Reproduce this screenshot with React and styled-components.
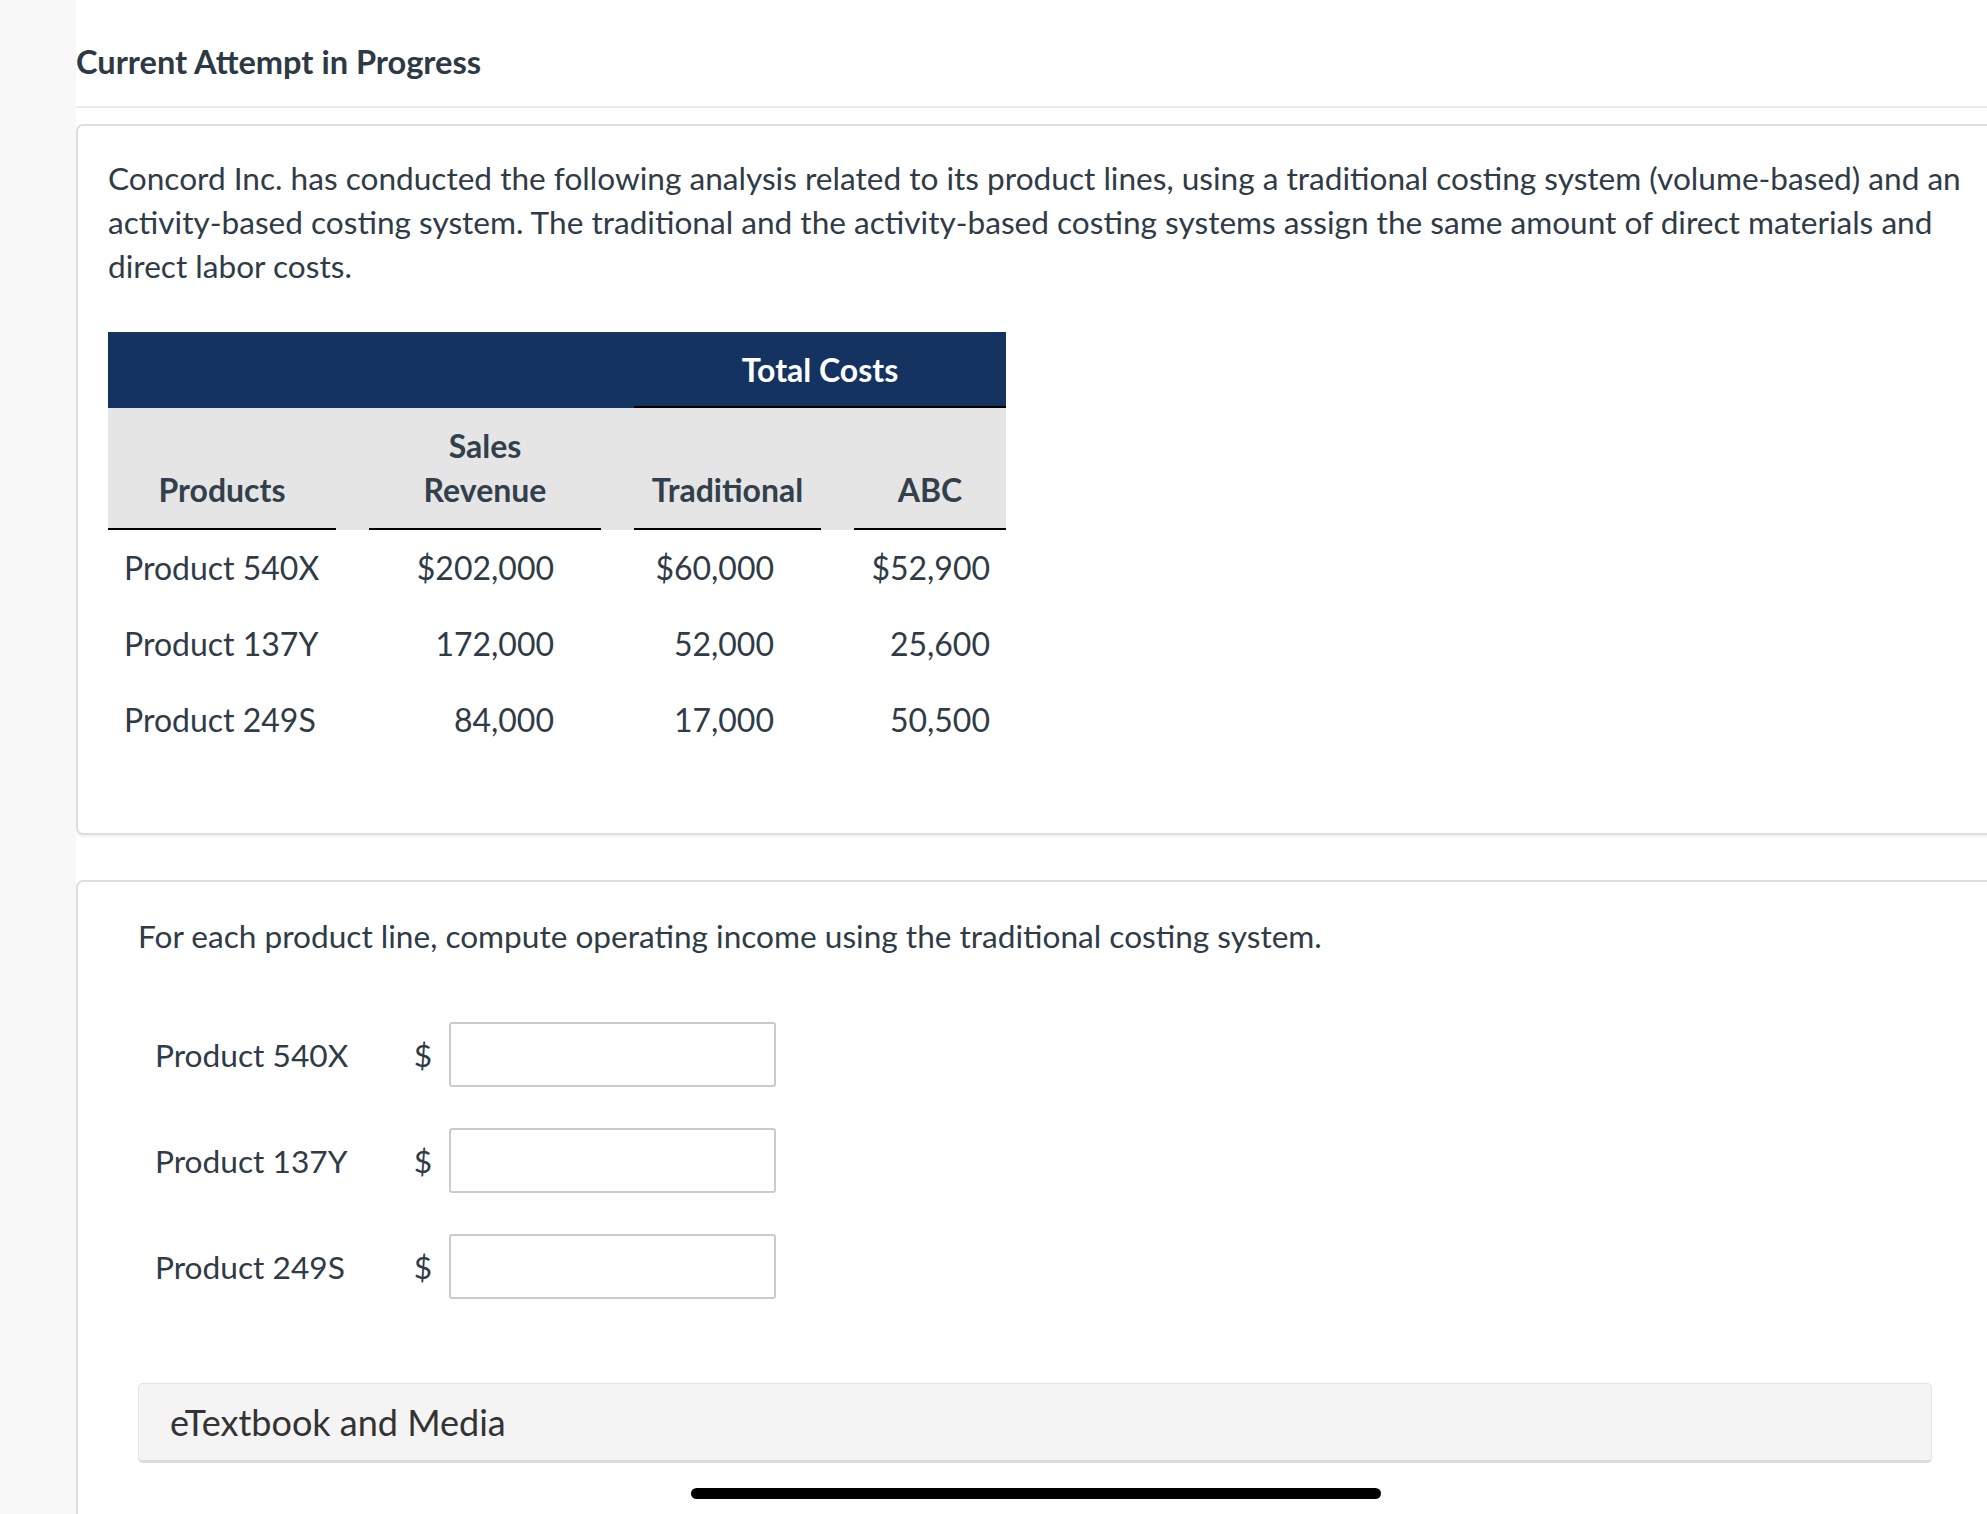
import React from "react";
import styled, { createGlobalStyle } from "styled-components";

const GlobalStyle = createGlobalStyle`
body{
    margin:0;
    background:#fff;
    font-family:Lato, "Noto Sans", sans-serif;
    color:#2f3b47;
}
`

const Page = styled.div`
position:relative;
display:flex;
height:1514px;
overflow:hidden;
`

const Sidebar = styled.div`
width:76px;
flex:none;
background:#f8f8f8;
`

const Main = styled.div`
flex:1;
min-width:0;
overflow:hidden;
`

const Heading = styled.h2`
margin:0;
padding:42px 0 24px;
font-size:32.6px;
line-height:40px;
font-weight:700;
color:#2d3945;
border-bottom:2px solid #ebebeb;
`

const Card = styled.div`
width:1930px;
box-sizing:border-box;
margin-top:${p => p.top}px;
padding:${p => p.pad};
border:2px solid #dedede;
border-radius:7px;
box-shadow:0 2px 2px rgba(0,0,0,0.06);
background:#fff;
`

const Text = styled.p`
margin:0;
font-size:31.6px;
line-height:44px;
`

const Table = styled.div`
width:898px;
margin-top:44px;
font-size:32px;
line-height:44px;
`

const cols = "228px 232px 187px 152px";

const TitleRow = styled.div`
display:grid;
grid-template-columns:${cols};
column-gap:33px;
height:76px;
background:#143361;
`

const TitleCell = styled.div`
grid-column:3 / 5;
box-sizing:border-box;
border-bottom:2px solid #000;
display:flex;
align-items:center;
justify-content:center;
padding-top:2px;
color:#fff;
font-weight:700;
`

const HeadRow = styled.div`
display:grid;
grid-template-columns:${cols};
column-gap:33px;
height:122px;
background:#e5e5e5;
`

const HeadCell = styled.div`
align-self:end;
padding-bottom:16px;
border-bottom:2px solid #000;
text-align:center;
font-weight:700;
color:#333f4b;
`

const DataRow = styled.div`
display:grid;
grid-template-columns:${cols};
column-gap:33px;
height:76px;
align-items:center;
`

const Cell = styled.div`
text-align:${p => p.align || "right"};
padding:${p => p.pad};
`

const Answers = styled.div`
display:flex;
flex-direction:column;
gap:41px;
margin:64px 0 0 17px;
`

const AnswerRow = styled.div`
display:flex;
align-items:center;
height:65px;
font-size:31.7px;
`

const Label = styled.span`
width:256px;
`

const Dollar = styled.span`
width:24px;
margin-right:14px;
text-align:center;
`

const Input = styled.input`
width:327px;
height:65px;
box-sizing:border-box;
border:2px solid #cbcbcb;
border-radius:3px;
background:#fff;
font:inherit;
`

const Media = styled.div`
width:1794px;
margin-top:84px;
height:80px;
box-sizing:border-box;
display:flex;
align-items:center;
padding-left:31px;
background:#f4f4f4;
border:1px solid #e2e2e2;
border-bottom:3px solid #dcdcdc;
border-radius:5px;
font-size:36px;
color:#333;
`

const HomeBar = styled.div`
position:absolute;
left:691px;
top:1488px;
width:690px;
height:11px;
border-radius:6px;
background:#000;
`

const rows = [
    ["Product 540X", "$202,000", "$60,000", "$52,900"],
    ["Product 137Y", "172,000", "52,000", "25,600"],
    ["Product 249S", "84,000", "17,000", "50,500"],
];

export default function App(){
    return(
        <Page>
            <GlobalStyle />
            <Sidebar />
            <Main>
                <Heading>Current Attempt in Progress</Heading>
                <Card top={16} pad="30px 30px 75px">
                    <Text>
                        Concord Inc. has conducted the following analysis related to its product lines, using a traditional costing system (volume-based) and an activity-based costing system. The traditional and the activity-based costing systems assign the same amount of direct materials and direct labor costs.
                    </Text>
                    <Table>
                        <TitleRow>
                            <TitleCell>Total Costs</TitleCell>
                        </TitleRow>
                        <HeadRow>
                            <HeadCell>Products</HeadCell>
                            <HeadCell>Sales<br />Revenue</HeadCell>
                            <HeadCell>Traditional</HeadCell>
                            <HeadCell>ABC</HeadCell>
                        </HeadRow>
                        {rows.map(r => (
                            <DataRow key={r[0]}>
                                <Cell align="left" pad="0 0 0 16px">{r[0]}</Cell>
                                <Cell pad="0 47px 0 0">{r[1]}</Cell>
                                <Cell pad="0 47px 0 0">{r[2]}</Cell>
                                <Cell pad="0 16px 0 0">{r[3]}</Cell>
                            </DataRow>
                        ))}
                    </Table>
                </Card>
                <Card top={45} pad="32px 60px 200px">
                    <Text>For each product line, compute operating income using the traditional costing system.</Text>
                    <Answers>
                        {rows.map(r => (
                            <AnswerRow key={r[0]}>
                                <Label>{r[0]}</Label>
                                <Dollar>$</Dollar>
                                <Input type="text" />
                            </AnswerRow>
                        ))}
                    </Answers>
                    <Media>eTextbook and Media</Media>
                </Card>
            </Main>
            <HomeBar />
        </Page>
    )
}
